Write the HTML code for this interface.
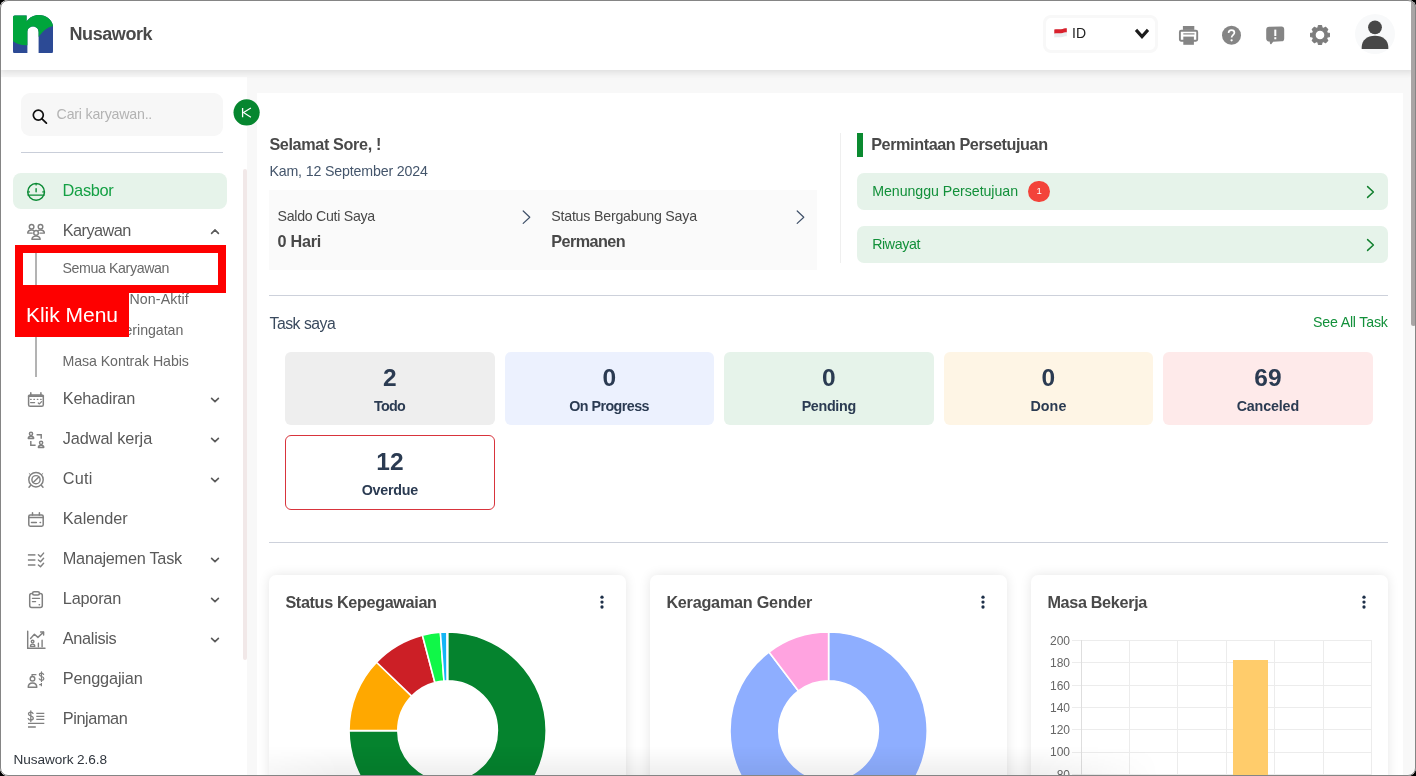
<!DOCTYPE html>
<html><head><meta charset="utf-8"><title>Nusawork</title>
<style>
*{box-sizing:border-box;margin:0;padding:0}
html,body{width:1416px;height:776px;overflow:hidden;background:#000;font-family:"Liberation Sans",sans-serif;}
#win{position:absolute;left:0;top:0;width:1416px;height:776px;background:#f8f8f8;border-radius:8px;overflow:hidden;will-change:transform}
#frame{position:absolute;left:0;top:0;width:1416px;height:776px;border:1px solid #858585;border-radius:8px;z-index:100;pointer-events:none}
.abs{position:absolute}
.t{position:absolute;white-space:nowrap;line-height:20px}
#hdr{position:absolute;left:0;top:0;width:1416px;height:70px;background:#fff;box-shadow:0 1.5px 8px rgba(0,0,0,.125);z-index:5}
</style></head><body>
<div id="win">
<div id="hdr">
<svg class="abs" style="left:13px;top:14.5px" width="40" height="38.5" viewBox="0 0 40 38.5">
<defs><clipPath id="nclip"><path d="M0,2.2 Q0,0.5 1.7,0.5 L13.6,0.5 L13.6,6.4 C16.5,2.3 20.8,0 25.8,0 C33.2,0 38.6,4.3 40,10.6 L40,36.3 Q40,38.5 37.8,38.5 L25.6,38.5 L25.6,17.2 C25.6,13.8 23.2,11.6 20,11.6 C16.8,11.6 14.4,13.8 14.4,17.2 L14.4,38.5 L2.2,38.5 Q0,38.5 0,36.3 Z"/></clipPath></defs>
<g clip-path="url(#nclip)"><rect width="40" height="38.5" fill="#2c4a95"/>
<path d="M0,0 L40,0 L40,10.9 C33.5,12.3 29.5,16.5 25.6,21.8 C22.5,26 19.5,30.2 14.4,30.3 C8.5,30.5 4,29.2 0,26.3 Z" fill="#00a53c"/></g>
</svg>
<div class="t" style="left:69.5px;top:24px;font-size:18px;font-weight:700;color:#4a4a4a;letter-spacing:-0.42px;line-height:20px">Nusawork</div>
<!-- lang select -->
<div class="abs" style="left:1042.5px;top:15px;width:115px;height:37.5px;border:3px solid #f8f8f8;border-radius:8px;background:#fff"></div>
<svg class="abs" style="left:1054px;top:27.5px" width="13" height="10" viewBox="0 0 13 10"><path d="M0.3,1.6 C3,0.9 5,1.5 7,1.2 C9.5,0.9 11,0.2 12.8,0.3 L12.8,8.3 C11,8.2 9.5,8.9 7,9.2 C5,9.5 3,8.9 0.3,9.6 Z" fill="#e9ecee"/><path d="M0.3,1.6 C3,0.9 5,1.5 7,1.2 C9.5,0.9 11,0.2 12.8,0.3 L12.8,4.3 C11,4.2 9.5,4.9 7,5.2 C5,5.5 3,4.9 0.3,5.6 Z" fill="#d9202c"/></svg>
<div class="t" style="left:1072px;top:23px;font-size:14px;color:#222;line-height:20px">ID</div>
<svg class="abs" style="left:1133px;top:27px" width="18" height="14" viewBox="0 0 18 14"><path d="M3,2.9 L9,9.6 L15,2.9" fill="none" stroke="#1c1c1c" stroke-width="3.1" stroke-linecap="butt" stroke-linejoin="miter"/></svg>
<!-- printer -->
<svg class="abs" style="left:1178px;top:25px" width="21" height="21" viewBox="0 0 21 21">
<rect x="4.9" y="1" width="11.4" height="3.9" fill="#858585"/>
<rect x="1.9" y="5.7" width="17.3" height="10" rx="1.2" fill="#fff" stroke="#858585" stroke-width="1.9"/>
<rect x="5.3" y="8.3" width="11.2" height="1.2" fill="#858585"/><rect x="4" y="8.3" width="1.1" height="1.2" fill="#858585" opacity=".0"/>
<rect x="5.3" y="11.6" width="10.6" height="8.2" fill="#858585"/>
</svg>
<!-- help -->
<svg class="abs" style="left:1221px;top:25px" width="21" height="21" viewBox="0 0 21 21"><circle cx="10.5" cy="10.3" r="9.5" fill="#858585"/>
<path d="M7.6,8.1 C7.6,6.2 8.9,5.2 10.5,5.2 C12.2,5.2 13.4,6.3 13.4,7.8 C13.4,9.8 10.6,10.1 10.6,12.6" fill="none" stroke="#fff" stroke-width="1.7"/><circle cx="10.6" cy="15.3" r="1.15" fill="#fff"/></svg>
<!-- feedback -->
<svg class="abs" style="left:1265px;top:25px" width="21" height="21" viewBox="0 0 21 21"><path d="M4.2,1.8 L16.4,1.6 Q19.2,1.6 19.2,4.6 L19.2,13.4 Q19.2,16.2 16.4,16.3 L8.2,16.7 L6.2,19.2 Q5.4,19.6 5,18.6 L4.6,16.6 Q1.2,16.4 1.2,13.4 L1.2,4.8 Q1.2,1.9 4.2,1.8 Z" fill="#858585"/><rect x="9.3" y="4.6" width="2" height="6.4" fill="#fff"/><rect x="9.3" y="12.2" width="2" height="2.1" fill="#fff"/></svg>
<!-- gear -->
<svg class="abs" style="left:1309px;top:24px" width="22" height="22" viewBox="-11 -11 22 22" id="gear"><path d="M-2.00,-7.23 L-1.56,-9.37 L1.56,-9.37 L2.00,-7.23 L3.70,-6.53 L5.52,-7.73 L7.73,-5.52 L6.53,-3.70 L7.23,-2.00 L9.37,-1.56 L9.37,1.56 L7.23,2.00 L6.53,3.70 L7.73,5.52 L5.52,7.73 L3.70,6.53 L2.00,7.23 L1.56,9.37 L-1.56,9.37 L-2.00,7.23 L-3.70,6.53 L-5.52,7.73 L-7.73,5.52 L-6.53,3.70 L-7.23,2.00 L-9.37,1.56 L-9.37,-1.56 L-7.23,-2.00 L-6.53,-3.70 L-7.73,-5.52 L-5.52,-7.73 L-3.70,-6.53 Z M4.95,0 A4.95,4.95 0 1,0 -4.95,0 A4.95,4.95 0 1,0 4.95,0 Z" fill="#7d7d7d" fill-rule="evenodd" stroke="#7d7d7d" stroke-width="1.2" stroke-linejoin="round"/></svg>
<!-- avatar -->
<svg class="abs" style="left:1355px;top:14px" width="40" height="40" viewBox="0 0 40 40"><circle cx="20" cy="20" r="20" fill="#f8f9fa"/><circle cx="20" cy="13.3" r="6.9" fill="#484848"/><path d="M6.7,34.9 L6.7,33 C6.7,26.5 12,21.7 20,21.7 C28,21.7 33.3,26.5 33.3,33 L33.3,34.9 Z" fill="#484848"/></svg>
</div>
<div class="abs" style="left:0px;top:77px;width:247px;height:700px;background:#fff;border-radius:0px;"></div>
<div class="abs" style="left:243px;top:169px;width:4px;height:491px;background:#f1e8e8;border-radius:2px;"></div>
<div class="abs" style="left:21px;top:93px;width:202px;height:43px;background:#f7f7f7;border-radius:9px;"></div>
<svg class="abs" style="left:30px;top:107px" width="20" height="20" viewBox="0 0 20 20"><circle cx="8.3" cy="8.1" r="5.0" fill="none" stroke="#111" stroke-width="1.7"/><path d="M12,11.8 L16.4,16.1" stroke="#111" stroke-width="1.8" stroke-linecap="round"/></svg>
<div class="t" style="left:56.60px;top:104px;font-size:14.2px;color:#b3b3b3;line-height:20px;letter-spacing:-0.203px;">Cari karyawan..</div>
<div class="abs" style="left:21px;top:152px;width:202px;height:1.3px;background:#c9ced9;border-radius:0px;"></div>
<div class="abs" style="left:13px;top:173px;width:214px;height:36px;background:#e6f3ea;border-radius:8px;"></div>
<div class="t" style="left:62.60px;top:180px;font-size:16.4px;color:#14a044;line-height:20px;letter-spacing:-0.334px;">Dasbor</div>
<div class="t" style="left:62.80px;top:220px;font-size:16.3px;color:#595959;line-height:20px;letter-spacing:-0.555px;">Karyawan</div>
<svg class="abs" style="left:209px;top:226px" width="12" height="12" viewBox="0 0 12 12"><path d="M2.6,7.4 L6,4 L9.4,7.4" fill="none" stroke="#5a5a5a" stroke-width="1.65" stroke-linecap="round" stroke-linejoin="miter"/></svg>
<div class="t" style="left:62.80px;top:388px;font-size:16.3px;color:#595959;line-height:20px;letter-spacing:-0.227px;">Kehadiran</div>
<svg class="abs" style="left:209px;top:394px" width="12" height="12" viewBox="0 0 12 12"><path d="M2.6,4.3 L6,7.7 L9.4,4.3" fill="none" stroke="#5a5a5a" stroke-width="1.65" stroke-linecap="round" stroke-linejoin="miter"/></svg>
<div class="t" style="left:62.80px;top:428px;font-size:16.3px;color:#595959;line-height:20px;letter-spacing:-0.100px;">Jadwal kerja</div>
<svg class="abs" style="left:209px;top:434px" width="12" height="12" viewBox="0 0 12 12"><path d="M2.6,4.3 L6,7.7 L9.4,4.3" fill="none" stroke="#5a5a5a" stroke-width="1.65" stroke-linecap="round" stroke-linejoin="miter"/></svg>
<div class="t" style="left:62.80px;top:468px;font-size:16.3px;color:#595959;line-height:20px;letter-spacing:0.171px;">Cuti</div>
<svg class="abs" style="left:209px;top:474px" width="12" height="12" viewBox="0 0 12 12"><path d="M2.6,4.3 L6,7.7 L9.4,4.3" fill="none" stroke="#5a5a5a" stroke-width="1.65" stroke-linecap="round" stroke-linejoin="miter"/></svg>
<div class="t" style="left:62.80px;top:508px;font-size:16.3px;color:#595959;line-height:20px;letter-spacing:-0.036px;">Kalender</div>
<div class="t" style="left:62.80px;top:548px;font-size:16.3px;color:#595959;line-height:20px;letter-spacing:-0.263px;">Manajemen Task</div>
<svg class="abs" style="left:209px;top:554px" width="12" height="12" viewBox="0 0 12 12"><path d="M2.6,4.3 L6,7.7 L9.4,4.3" fill="none" stroke="#5a5a5a" stroke-width="1.65" stroke-linecap="round" stroke-linejoin="miter"/></svg>
<div class="t" style="left:62.80px;top:588px;font-size:16.3px;color:#595959;line-height:20px;letter-spacing:-0.220px;">Laporan</div>
<svg class="abs" style="left:209px;top:594px" width="12" height="12" viewBox="0 0 12 12"><path d="M2.6,4.3 L6,7.7 L9.4,4.3" fill="none" stroke="#5a5a5a" stroke-width="1.65" stroke-linecap="round" stroke-linejoin="miter"/></svg>
<div class="t" style="left:62.80px;top:628px;font-size:16.3px;color:#595959;line-height:20px;letter-spacing:-0.310px;">Analisis</div>
<svg class="abs" style="left:209px;top:634px" width="12" height="12" viewBox="0 0 12 12"><path d="M2.6,4.3 L6,7.7 L9.4,4.3" fill="none" stroke="#5a5a5a" stroke-width="1.65" stroke-linecap="round" stroke-linejoin="miter"/></svg>
<div class="t" style="left:62.80px;top:668px;font-size:16.3px;color:#595959;line-height:20px;letter-spacing:-0.175px;">Penggajian</div>
<div class="t" style="left:62.80px;top:708px;font-size:16.3px;color:#595959;line-height:20px;letter-spacing:-0.422px;">Pinjaman</div>
<div class="abs" style="left:35px;top:253px;width:1.9px;height:124px;background:#b3b3b3;border-radius:0px;"></div>
<div class="t" style="left:62.50px;top:258px;font-size:14.2px;color:#696969;line-height:20px;letter-spacing:-0.391px;">Semua Karyawan</div>
<div class="t" style="left:61.40px;top:289px;font-size:14.2px;color:#696969;line-height:20px;letter-spacing:0.112px;">Karyawan Non-Aktif</div>
<div class="t" style="left:77.50px;top:320px;font-size:14.2px;color:#696969;line-height:20px;letter-spacing:-0.045px;">Surat Peringatan</div>
<div class="t" style="left:62.50px;top:351px;font-size:14.2px;color:#696969;line-height:20px;letter-spacing:-0.080px;">Masa Kontrak Habis</div>
<div class="t" style="left:13.50px;top:750px;font-size:13.6px;color:#2f353d;line-height:20px;letter-spacing:-0.069px;">Nusawork 2.6.8</div>
<svg class="abs" style="left:25px;top:181px" width="22" height="22" viewBox="25 181 22 22" fill="none" stroke-linecap="round" stroke-linejoin="round"><circle cx="36.1" cy="191.9" r="8.35" stroke="#0b8a35" stroke-width="1.5"/><path d="M28.1,195.1 L44.1,195.1" stroke="#0b8a35" stroke-width="1.4"/><path d="M36.1,188.7 L36.1,191.8" stroke="#0b8a35" stroke-width="1.4"/><path d="M36.1,184 L36.1,184.9 M28.6,191.9 L29.4,191.9 M42.8,191.9 L43.6,191.9" stroke="#0b8a35" stroke-width="1.3"/></svg>
<svg class="abs" style="left:25px;top:222px" width="22" height="20" viewBox="25 222 22 20" fill="none" stroke-linecap="round" stroke-linejoin="round"><g stroke="#808080" stroke-width="1.45"><circle cx="31.6" cy="226.7" r="2.3"/><circle cx="40.5" cy="226.7" r="2.3"/><path d="M33.6,230.3 C33,230 32.3,229.9 31.6,229.9 C29.3,229.9 27.8,231.2 27.7,233.1 L32.2,233.1"/><path d="M38.5,230.3 C39.1,230 39.8,229.9 40.5,229.9 C42.8,229.9 44.3,231.2 44.4,233.1 L39.9,233.1"/><circle cx="36.05" cy="232.9" r="2.3"/><path d="M31.9,239.3 C32,237.2 33.6,236.1 36.05,236.1 C38.5,236.1 40.1,237.2 40.2,239.3 Z"/></g></svg>
<svg class="abs" style="left:26px;top:391px" width="20" height="18" viewBox="26 391 20 18" fill="none" stroke-linecap="round" stroke-linejoin="round"><g stroke="#808080" stroke-width="1.5"><rect x="28.6" y="395" width="14.7" height="11.3" rx="1.6"/><path d="M28.6,396.1 L43.3,396.1" stroke-width="1.8"/><path d="M30.8,392.8 L30.8,395 M40.9,392.8 L40.9,395"/><path d="M30.6,399.3 L31.2,399.3 M33.9,399.3 L34.5,399.3 M37.3,399.3 L37.9,399.3 M40.6,399.3 L41.2,399.3" stroke-width="1.3"/><path d="M30.6,402.6 L34.6,402.6" stroke-width="1.3"/><path d="M38.3,402.9 L39.4,403.9 L41.6,401.6" stroke-width="1.3"/></g></svg>
<svg class="abs" style="left:26px;top:431px" width="20" height="18" viewBox="26 431 20 18" fill="none" stroke-linecap="round" stroke-linejoin="round"><g stroke="#808080" stroke-width="1.45"><circle cx="31" cy="433.8" r="1.6"/><path d="M28.3,438.4 C28.4,436.7 29.4,436.2 31,436.2 C32.6,436.2 33.6,436.7 33.7,438.4 Z"/><circle cx="41.1" cy="442.8" r="1.6"/><path d="M38.4,447.4 C38.5,445.7 39.5,445.2 41.1,445.2 C42.7,445.2 43.7,445.7 43.8,447.4 Z"/><path d="M36.6,434.7 L41.2,434.7 L41.2,438.8" stroke-linejoin="miter" stroke-linecap="butt"/><path d="M30.8,441 L30.8,445.2 L35.6,445.2" stroke-linejoin="miter" stroke-linecap="butt"/></g></svg>
<svg class="abs" style="left:26px;top:471px" width="20" height="18" viewBox="26 471 20 18" fill="none" stroke-linecap="round" stroke-linejoin="round"><g stroke="#808080" stroke-width="1.45"><circle cx="36" cy="479.7" r="7.2"/><circle cx="36" cy="479.7" r="4.1"/><path d="M33.2,482.5 L38.8,476.9"/><path d="M30.5,485.6 L29,487.3 M41.5,485.6 L43,487.3"/><path d="M29.2,473.6 L30.2,474.5 M42.8,473.6 L41.8,474.5" stroke-width="1"/></g></svg>
<svg class="abs" style="left:26px;top:511px" width="20" height="18" viewBox="26 511 20 18" fill="none" stroke-linecap="round" stroke-linejoin="round"><g stroke="#808080" stroke-width="1.5"><rect x="28.8" y="515" width="14.4" height="11.2" rx="1.4"/><path d="M28.8,517.6 L43.2,517.6"/><path d="M32.5,512.7 L32.5,515 M39.4,512.7 L39.4,515"/><path d="M31.5,522.4 L36.4,522.4"/><path d="M40.1,522.4 L40.5,522.4"/></g></svg>
<svg class="abs" style="left:26px;top:551px" width="20" height="18" viewBox="26 551 20 18" fill="none" stroke-linecap="round" stroke-linejoin="round"><g stroke="#808080" stroke-width="1.5"><path d="M27.9,554.9 L35.4,554.9" stroke-linecap="butt"/><path d="M38.4,554.8 L40.5,556.6999999999999 L43.6,553.1" stroke-width="1.4"/><path d="M27.9,560 L35.4,560" stroke-linecap="butt"/><path d="M38.4,559.9 L40.5,561.8 L43.6,558.2" stroke-width="1.4"/><path d="M27.9,565 L35.4,565" stroke-linecap="butt"/><path d="M38.4,564.9 L40.5,566.8 L43.6,563.2" stroke-width="1.4"/></g></svg>
<svg class="abs" style="left:26px;top:590px" width="20" height="20" viewBox="26 590 20 20" fill="none" stroke-linecap="round" stroke-linejoin="round"><g stroke="#808080" stroke-width="1.5"><rect x="29.7" y="593.6" width="12.6" height="14" rx="2"/><rect x="32.6" y="591.7" width="6.8" height="3.3" rx="1.5" fill="#fff"/><path d="M32.4,598.3 L39.6,598.3 M32.4,601.6 L35.6,601.6" stroke-width="1.3"/><path d="M39.2,604.8 L39.5,604.8" stroke-width="1.45"/></g></svg>
<svg class="abs" style="left:26px;top:630px" width="21" height="20" viewBox="26 630 21 20" fill="none" stroke-linecap="round" stroke-linejoin="round"><g stroke="#808080" stroke-width="1.45"><path d="M27.7,631.2 L27.7,648.3 L45,648.3" stroke-linejoin="miter"/><path d="M30.6,638.4 L34.4,634.3 L37.9,637.4 L43.4,632.2"/><path d="M40.6,631.9 L43.6,631.9 L43.6,634.9"/><circle cx="32.6" cy="641.6" r="1.3"/><path d="M30.3,646.3 C30.4,644.6 31.2,644.1 32.6,644.1 C34,644.1 34.8,644.6 34.9,646.3 Z" stroke-width="1.2"/><path d="M38.4,643.3 L38.4,646.8 M42.1,640.3 L42.1,646.8" stroke-width="1.4"/></g></svg>
<svg class="abs" style="left:26px;top:670px" width="20" height="19" viewBox="26 670 20 19" fill="none" stroke-linecap="round" stroke-linejoin="round"><g stroke="#808080" stroke-width="1.45"><circle cx="32.5" cy="678.7" r="2.3"/><path d="M28.2,687.3 C28.3,684.3 29.8,683 32.5,683 C35.2,683 36.7,684.3 36.8,687.3 Z"/><path d="M32.1,676 L32.1,674.6 L36.4,674.6" stroke-linejoin="miter" stroke-linecap="butt" stroke-width="1.3"/><path d="M43.6,674.4 C43.2,673.5 42.4,673.1 41.5,673.1 C40.2,673.1 39.4,673.8 39.4,674.8 C39.4,677 43.8,676 43.8,678.4 C43.8,679.5 42.9,680.2 41.6,680.2 C40.5,680.2 39.6,679.7 39.2,678.8 M41.5,671.8 L41.5,681.4" stroke-width="1.2"/><path d="M39.2,684.6 L41.2,684.6 M41.4,683 L41.4,686.2" stroke-width="1.2" stroke-linecap="butt"/></g></svg>
<svg class="abs" style="left:26px;top:709px" width="20" height="20" viewBox="26 709 20 20" fill="none" stroke-linecap="round" stroke-linejoin="round"><g stroke="#808080" stroke-width="1.45"><path d="M33,713.4 C32.6,712.5 31.8,712.1 30.8,712.1 C29.4,712.1 28.5,712.9 28.5,714 C28.5,716.5 33.3,715.4 33.3,718.1 C33.3,719.4 32.3,720.2 30.8,720.2 C29.6,720.2 28.6,719.6 28.2,718.6 M30.8,710.8 L30.8,721.6" stroke-width="1.3"/><path d="M36.3,713.4 L44.3,713.4 M36.3,716.4 L44.3,716.4 M36.3,719.4 L44.3,719.4 M28,723.4 L44.3,723.4 M28,727 L35.8,727" stroke-linecap="butt" stroke-width="1.3"/></g></svg>
<div class="abs" style="left:257px;top:93px;width:1146px;height:700px;background:#fff;border-radius:0px;"></div>
<div class="t" style="left:269.40px;top:134px;font-size:16.2px;color:#494949;line-height:20px;font-weight:700;letter-spacing:-0.361px;">Selamat Sore, !</div>
<div class="t" style="left:269.40px;top:161px;font-size:14.2px;color:#44556b;line-height:20px;letter-spacing:-0.149px;">Kam, 12 September 2024</div>
<div class="abs" style="left:269px;top:190px;width:547.5px;height:79.5px;background:#fafafa;border-radius:0px;"></div>
<div class="t" style="left:277.50px;top:206px;font-size:14.2px;color:#484848;line-height:20px;letter-spacing:-0.288px;">Saldo Cuti Saya</div>
<div class="t" style="left:277.60px;top:231px;font-size:16.2px;color:#484848;line-height:20px;font-weight:700;letter-spacing:-0.245px;">0 Hari</div>
<div class="t" style="left:551.20px;top:206px;font-size:14.2px;color:#484848;line-height:20px;letter-spacing:-0.200px;">Status Bergabung Saya</div>
<div class="t" style="left:551.20px;top:231px;font-size:16.2px;color:#484848;line-height:20px;font-weight:700;letter-spacing:-0.534px;">Permanen</div>
<svg class="abs" style="left:522px;top:209px" width="10" height="16" viewBox="0 0 10 16"><path d="M1.2,2 L7.8,8.2 L1.2,14.4" fill="none" stroke="#3f5068" stroke-width="1.2" stroke-linecap="round" stroke-linejoin="round"/></svg>
<svg class="abs" style="left:795.7px;top:209px" width="10" height="16" viewBox="0 0 10 16"><path d="M1.2,2 L7.8,8.2 L1.2,14.4" fill="none" stroke="#3f5068" stroke-width="1.2" stroke-linecap="round" stroke-linejoin="round"/></svg>
<div class="abs" style="left:840.3px;top:133px;width:1.2px;height:130px;background:#efefef;border-radius:0px;"></div>
<div class="abs" style="left:857.3px;top:133px;width:6px;height:23.5px;background:#0a8a30;border-radius:0px;"></div>
<div class="t" style="left:871.20px;top:134px;font-size:16.2px;color:#494949;line-height:20px;font-weight:700;letter-spacing:-0.403px;">Permintaan Persetujuan</div>
<div class="abs" style="left:857.3px;top:173px;width:530.7px;height:37px;background:#e6f3ea;border-radius:7px;"></div>
<div class="abs" style="left:857.3px;top:226px;width:530.7px;height:37px;background:#e6f3ea;border-radius:7px;"></div>
<div class="t" style="left:872.20px;top:181px;font-size:14.2px;color:#12903a;line-height:20px;letter-spacing:-0.044px;">Menunggu Persetujuan</div>
<div class="t" style="left:872.20px;top:234px;font-size:14.2px;color:#12903a;line-height:20px;letter-spacing:-0.368px;">Riwayat</div>
<div class="abs" style="left:1028.4px;top:180.9px;width:21.2px;height:21.2px;border-radius:11px;background:#f3433a"></div>
<div class="t" style="left:1036.56px;top:181px;font-size:9.5px;color:#fff;line-height:20px;">1</div>
<svg class="abs" style="left:1365px;top:183.9px" width="12" height="16" viewBox="0 0 12 16"><path d="M2.6,2.6 L8.4,8 L2.6,13.4" fill="none" stroke="#12802f" stroke-width="1.5" stroke-linecap="round" stroke-linejoin="round"/></svg>
<svg class="abs" style="left:1365px;top:236.9px" width="12" height="16" viewBox="0 0 12 16"><path d="M2.6,2.6 L8.4,8 L2.6,13.4" fill="none" stroke="#12802f" stroke-width="1.5" stroke-linecap="round" stroke-linejoin="round"/></svg>
<div class="abs" style="left:269px;top:295px;width:1119px;height:1px;background:#cdd1db;border-radius:0px;"></div>
<div class="t" style="left:269.50px;top:314px;font-size:15.8px;color:#3a4a5e;line-height:20px;letter-spacing:-0.494px;">Task saya</div>
<div class="t" style="left:1313.00px;top:312px;font-size:14.2px;color:#12903a;line-height:20px;letter-spacing:-0.191px;">See All Task</div>
<div class="abs" style="left:285.2px;top:352px;width:209.4px;height:73px;background:#eeeeee;border-radius:6px;"></div>
<div class="t" style="left:383.09px;top:368px;font-size:24.5px;color:#2b3b52;line-height:20px;font-weight:700;">2</div>
<div class="t" style="left:374.00px;top:396px;font-size:14.3px;color:#2b3b52;line-height:20px;font-weight:700;letter-spacing:-0.693px;">Todo</div>
<div class="abs" style="left:504.7px;top:352px;width:209.4px;height:73px;background:#ecf1fe;border-radius:6px;"></div>
<div class="t" style="left:602.59px;top:368px;font-size:24.5px;color:#2b3b52;line-height:20px;font-weight:700;">0</div>
<div class="t" style="left:569.20px;top:396px;font-size:14.3px;color:#2b3b52;line-height:20px;font-weight:700;letter-spacing:-0.543px;">On Progress</div>
<div class="abs" style="left:724.2px;top:352px;width:209.4px;height:73px;background:#e6f3ea;border-radius:6px;"></div>
<div class="t" style="left:822.09px;top:368px;font-size:24.5px;color:#2b3b52;line-height:20px;font-weight:700;">0</div>
<div class="t" style="left:801.65px;top:396px;font-size:14.3px;color:#2b3b52;line-height:20px;font-weight:700;letter-spacing:-0.318px;">Pending</div>
<div class="abs" style="left:943.7px;top:352px;width:209.4px;height:73px;background:#fef5e5;border-radius:6px;"></div>
<div class="t" style="left:1041.59px;top:368px;font-size:24.5px;color:#2b3b52;line-height:20px;font-weight:700;">0</div>
<div class="t" style="left:1030.40px;top:396px;font-size:14.3px;color:#2b3b52;line-height:20px;font-weight:700;letter-spacing:0.083px;">Done</div>
<div class="abs" style="left:1163.2px;top:352px;width:209.4px;height:73px;background:#feeaea;border-radius:6px;"></div>
<div class="t" style="left:1254.27px;top:368px;font-size:24.5px;color:#2b3b52;line-height:20px;font-weight:700;">69</div>
<div class="t" style="left:1236.65px;top:396px;font-size:14.3px;color:#2b3b52;line-height:20px;font-weight:700;letter-spacing:-0.155px;">Canceled</div>
<div class="abs" style="left:285.2px;top:435px;width:209.4px;height:74.8px;border:1.2px solid #d8343c;border-radius:6px;background:#fff"></div>
<div class="t" style="left:376.27px;top:452px;font-size:24.5px;color:#2b3b52;line-height:20px;font-weight:700;">12</div>
<div class="t" style="left:361.65px;top:480px;font-size:14.3px;color:#2b3b52;line-height:20px;font-weight:700;letter-spacing:-0.253px;">Overdue</div>
<div class="abs" style="left:269px;top:542px;width:1119px;height:1px;background:#cdd1db;border-radius:0px;"></div>
<div class="abs" style="left:269px;top:575px;width:357.3px;height:260px;background:#fff;border-radius:7px;box-shadow:0 0 12px rgba(0,0,0,.10)"></div>
<div class="t" style="left:285.40px;top:592px;font-size:16.2px;color:#494949;line-height:20px;font-weight:700;letter-spacing:-0.344px;">Status Kepegawaian</div>
<svg class="abs" style="left:599.1px;top:594px" width="6" height="16" viewBox="0 0 6 16"><circle cx="3" cy="3.2" r="1.65" fill="#1e3049"/><circle cx="3" cy="8.1" r="1.65" fill="#1e3049"/><circle cx="3" cy="13" r="1.65" fill="#1e3049"/></svg>
<div class="abs" style="left:650px;top:575px;width:357.3px;height:260px;background:#fff;border-radius:7px;box-shadow:0 0 12px rgba(0,0,0,.10)"></div>
<div class="t" style="left:666.40px;top:592px;font-size:16.2px;color:#494949;line-height:20px;font-weight:700;letter-spacing:-0.230px;">Keragaman Gender</div>
<svg class="abs" style="left:980.1px;top:594px" width="6" height="16" viewBox="0 0 6 16"><circle cx="3" cy="3.2" r="1.65" fill="#1e3049"/><circle cx="3" cy="8.1" r="1.65" fill="#1e3049"/><circle cx="3" cy="13" r="1.65" fill="#1e3049"/></svg>
<div class="abs" style="left:1031px;top:575px;width:357.3px;height:260px;background:#fff;border-radius:7px;box-shadow:0 0 12px rgba(0,0,0,.10)"></div>
<div class="t" style="left:1047.40px;top:592px;font-size:16.2px;color:#494949;line-height:20px;font-weight:700;letter-spacing:-0.325px;">Masa Bekerja</div>
<svg class="abs" style="left:1361.1px;top:594px" width="6" height="16" viewBox="0 0 6 16"><circle cx="3" cy="3.2" r="1.65" fill="#1e3049"/><circle cx="3" cy="8.1" r="1.65" fill="#1e3049"/><circle cx="3" cy="13" r="1.65" fill="#1e3049"/></svg>
<svg class="abs" style="left:346.8px;top:630.2px" width="201.2" height="148.6" viewBox="-100.6 -100.6 201.2 148.6"><path d="M0.00,-98.60 A98.6,98.6 0 1,1 -98.60,0.00 L-49.80,0.00 A49.8,49.8 0 1,0 0.00,-49.80 Z" fill="#05832e" stroke="#fff" stroke-width="1.6" stroke-linejoin="round"/><path d="M-98.60,0.00 A98.6,98.6 0 0,1 -71.05,-68.37 L-35.88,-34.53 A49.8,49.8 0 0,0 -49.80,0.00 Z" fill="#ffa800" stroke="#fff" stroke-width="1.6" stroke-linejoin="round"/><path d="M-71.05,-68.37 A98.6,98.6 0 0,1 -25.19,-95.33 L-12.72,-48.15 A49.8,49.8 0 0,0 -35.88,-34.53 Z" fill="#cc1f26" stroke="#fff" stroke-width="1.6" stroke-linejoin="round"/><path d="M-25.19,-95.33 A98.6,98.6 0 0,1 -7.22,-98.34 L-3.65,-49.67 A49.8,49.8 0 0,0 -12.72,-48.15 Z" fill="#10f748" stroke="#fff" stroke-width="1.6" stroke-linejoin="round"/><path d="M-7.22,-98.34 A98.6,98.6 0 0,1 -0.52,-98.60 L-0.26,-49.80 A49.8,49.8 0 0,0 -3.65,-49.67 Z" fill="#13b5f5" stroke="#fff" stroke-width="1.6" stroke-linejoin="round"/><path d="M-0.52,-98.60 A98.6,98.6 0 0,1 -0.00,-98.60 L-0.00,-49.80 A49.8,49.8 0 0,0 -0.26,-49.80 Z" fill="#05832e" stroke="#fff" stroke-width="1.6" stroke-linejoin="round"/></svg>
<svg class="abs" style="left:728.0px;top:630.2px" width="201.2" height="148.6" viewBox="-100.6 -100.6 201.2 148.6"><path d="M0.00,-98.60 A98.6,98.6 0 1,1 -59.61,-78.54 L-30.11,-39.67 A49.8,49.8 0 1,0 0.00,-49.80 Z" fill="#8eaeff" stroke="#fff" stroke-width="1.6" stroke-linejoin="round"/><path d="M-59.61,-78.54 A98.6,98.6 0 0,1 -0.00,-98.60 L-0.00,-49.80 A49.8,49.8 0 0,0 -30.11,-39.67 Z" fill="#ffa3e0" stroke="#fff" stroke-width="1.6" stroke-linejoin="round"/></svg>
<svg class="abs" style="left:1040px;top:630px" width="340" height="150" viewBox="1040 630 340 150" shape-rendering="crispEdges"><rect x="1072.3" y="640.20" width="299.8" height="1" fill="#ececec"/><rect x="1072.3" y="662.47" width="299.8" height="1" fill="#ececec"/><rect x="1072.3" y="684.74" width="299.8" height="1" fill="#ececec"/><rect x="1072.3" y="707.01" width="299.8" height="1" fill="#ececec"/><rect x="1072.3" y="729.28" width="299.8" height="1" fill="#ececec"/><rect x="1072.3" y="751.55" width="299.8" height="1" fill="#ececec"/><rect x="1072.3" y="773.82" width="299.8" height="1" fill="#ececec"/><rect x="1080.50" y="640.2" width="1" height="140" fill="#dedede"/><rect x="1128.93" y="640.2" width="1" height="140" fill="#ececec"/><rect x="1177.36" y="640.2" width="1" height="140" fill="#ececec"/><rect x="1225.79" y="640.2" width="1" height="140" fill="#ececec"/><rect x="1274.22" y="640.2" width="1" height="140" fill="#ececec"/><rect x="1322.65" y="640.2" width="1" height="140" fill="#ececec"/><rect x="1371.08" y="640.2" width="1" height="140" fill="#ececec"/><rect x="1233.1" y="660" width="35.2" height="120" fill="#ffcc6b"/></svg>
<div class="t" style="left:1049.98px;top:631px;font-size:12px;color:#666;line-height:20px;">200</div>
<div class="t" style="left:1049.98px;top:653px;font-size:12px;color:#666;line-height:20px;">180</div>
<div class="t" style="left:1049.98px;top:676px;font-size:12px;color:#666;line-height:20px;">160</div>
<div class="t" style="left:1049.98px;top:698px;font-size:12px;color:#666;line-height:20px;">140</div>
<div class="t" style="left:1049.98px;top:720px;font-size:12px;color:#666;line-height:20px;">120</div>
<div class="t" style="left:1049.98px;top:742px;font-size:12px;color:#666;line-height:20px;">100</div>
<div class="t" style="left:1056.65px;top:765px;font-size:12px;color:#666;line-height:20px;">80</div>
<div class="abs" style="left:269px;top:746px;width:891px;height:30px;background:linear-gradient(to bottom,rgba(0,0,0,0),rgba(0,0,0,.068));-webkit-mask-image:linear-gradient(to right,rgba(0,0,0,.55) 0,#000 8%,#000 86%,transparent 100%);mask-image:linear-gradient(to right,rgba(0,0,0,.55) 0,#000 8%,#000 86%,transparent 100%);z-index:30"></div>
<div class="abs" style="left:15px;top:245px;width:211px;height:48px;border:8px solid #fe0000"></div>
<div class="abs" style="left:15px;top:292.5px;width:114px;height:44.2px;background:#fe0000;border-radius:0px;"></div>
<div class="t" style="left:26.00px;top:305px;font-size:21px;color:#fff;line-height:20px;letter-spacing:-0.026px;">Klik Menu</div>
<svg class="abs" style="left:232px;top:98px;z-index:6" width="30" height="30" viewBox="232 98 30 30"><circle cx="246.6" cy="112.4" r="13.1" fill="#06862f"/><path d="M242.6,107.9 L242.6,117.3" stroke="#fff" stroke-width="1.3" fill="none"/><path d="M250.9,108.1 L243.5,112.6 L250.9,117.2" stroke="#fff" stroke-width="1.15" fill="none" stroke-linejoin="miter"/></svg>
<div class="abs" style="left:1411px;top:0;width:5px;height:325.5px;background:#a9a5a5;border-radius:0 0 2.5px 2.5px;z-index:50"></div>

</div>
<div id="frame"></div>
</body></html>
